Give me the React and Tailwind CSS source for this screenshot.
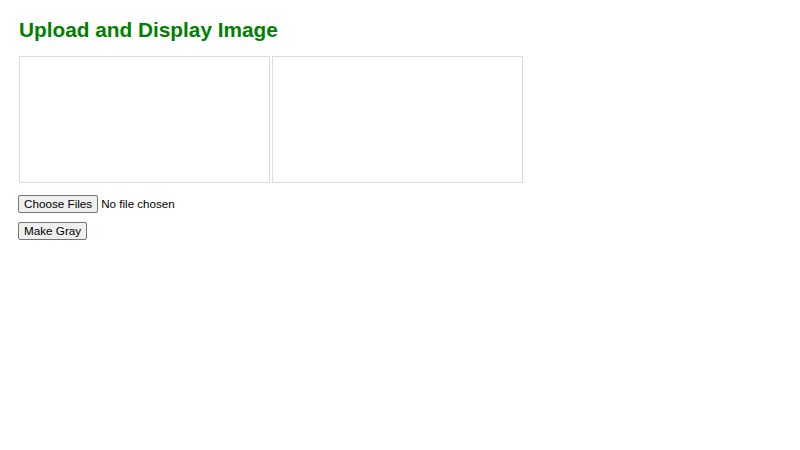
import React from 'react';

// simple upload page: two preview boxes + file input + gray button
const App = () => {
  return (
    <div className="min-h-screen bg-white px-[18px] pt-[17px] font-['Liberation_Sans',Arial,sans-serif] text-black">
      <h2 className="text-[20.8px] font-bold leading-[26px] text-[#008000] pl-px">Upload and Display Image</h2>

      <div className="mt-[13px] flex gap-[2px] pl-px">
        <div className="h-[127px] w-[251px] border border-[#dcdcdc]"></div>
        <div className="h-[127px] w-[251px] border border-[#dcdcdc]"></div>
      </div>

      <div className="mt-[12px] flex h-[18px] items-center">
        <input
          type="file"
          multiple
          className="h-[18px] text-[11.6px] leading-[16px] file:mr-[3px] file:h-[18px] file:rounded-[2px] file:border file:border-[#767676] file:bg-[#efefef] file:px-[5px] file:text-[11.7px] file:leading-[16px] file:text-black"
        />
      </div>

      <div className="mt-[9px] flex">
        <button className="h-[18px] rounded-[2px] border border-[#767676] bg-[#efefef] px-[5px] text-[11.7px] leading-[16px] text-black">
          Make Gray
        </button>
      </div>
    </div>
  );
};

export default App;
